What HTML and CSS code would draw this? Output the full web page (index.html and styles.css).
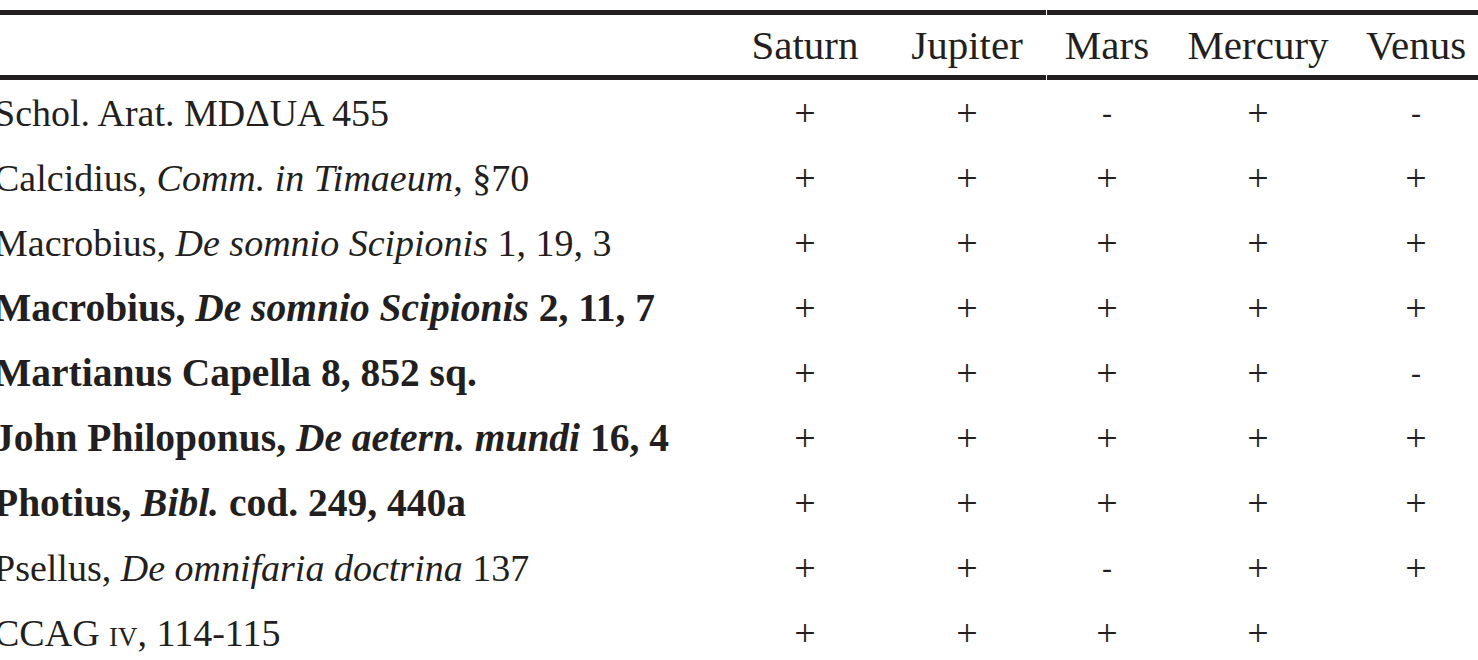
FILE: index.html
```html
<!DOCTYPE html>
<html lang="en">
<head>
<meta charset="utf-8">
<title>Planets table</title>
<link rel="stylesheet" href="styles.css">
</head>
<body>
<div class="wrap">
<table class="planets">
  <colgroup>
    <col class="c-src">
    <col class="c-sat">
    <col class="c-jup">
    <col class="c-mar">
    <col class="c-mer">
    <col class="c-ven">
  </colgroup>
  <thead>
    <tr>
      <th class="src"></th>
      <th>Saturn</th>
      <th>Jupiter</th>
      <th class="mars">Mars</th>
      <th>Mercury</th>
      <th>Venus</th>
    </tr>
  </thead>
  <tbody>
    <tr>
      <td class="src">Schol. Arat. MDΔUA <span class="num">455</span></td>
      <td>+</td><td>+</td><td class="minus">-</td><td>+</td><td class="minus">-</td>
    </tr>
    <tr>
      <td class="src">Calcidius, <i>Comm. in Timaeum</i>, §<span class="num">70</span></td>
      <td>+</td><td>+</td><td>+</td><td>+</td><td>+</td>
    </tr>
    <tr>
      <td class="src">Macrobius, <i>De somnio Scipionis</i> <span class="num">1, 19, 3</span></td>
      <td>+</td><td>+</td><td>+</td><td>+</td><td>+</td>
    </tr>
    <tr>
      <td class="src bold">Macrobius, <i>De somnio Scipionis</i> <span class="num">2, 11, 7</span></td>
      <td>+</td><td>+</td><td>+</td><td>+</td><td>+</td>
    </tr>
    <tr>
      <td class="src bold">Martianus Capella <span class="num">8, 852</span> sq.</td>
      <td>+</td><td>+</td><td>+</td><td>+</td><td class="minus">-</td>
    </tr>
    <tr>
      <td class="src bold">John Philoponus, <i>De aetern. mundi</i> <span class="num">16, 4</span></td>
      <td>+</td><td>+</td><td>+</td><td>+</td><td>+</td>
    </tr>
    <tr>
      <td class="src bold">Photius, <i>Bibl.</i> cod. <span class="num">249, 440a</span></td>
      <td>+</td><td>+</td><td>+</td><td>+</td><td>+</td>
    </tr>
    <tr>
      <td class="src">Psellus, <i>De omnifaria doctrina</i> <span class="num">137</span></td>
      <td>+</td><td>+</td><td class="minus">-</td><td>+</td><td>+</td>
    </tr>
    <tr>
      <td class="src">CCAG <span class="sc">iv</span>, <span class="num">114-115</span></td>
      <td>+</td><td>+</td><td>+</td><td>+</td><td></td>
    </tr>
  </tbody>
</table>
</div>
</body>
</html>
```

FILE: styles.css
```css
html, body {
  margin: 0;
  padding: 0;
  background: #ffffff;
  overflow: hidden;
}

body {
  font-family: "Liberation Serif", "Times New Roman", serif;
  color: #231f20;
}

.wrap {
  margin-top: 10px;
  margin-left: -6px;
}

.planets {
  border-collapse: separate;
  border-spacing: 0;
  table-layout: fixed;
  width: 1489px;
  font-size: 38px;
  line-height: 44px;
  font-variant-numeric: oldstyle-nums;
}

.c-src { width: 729px; }
.c-sat { width: 164px; }
.c-jup { width: 160px; }
.c-mar { width: 120px; }
.c-mer { width: 182px; }
.c-ven { width: 134px; }

.planets th {
  font-weight: normal;
  font-size: 41px;
  line-height: 44px;
  height: 60px;
  box-sizing: content-box;
  padding: 0;
  text-align: center;
  vertical-align: middle;
  border-top: 5px solid #231f20;
  border-bottom: 5px solid #231f20;
  white-space: nowrap;
}

.planets th.mars {
  position: relative;
}

.planets th.mars::after {
  content: "";
  position: absolute;
  left: -1px;
  top: -5px;
  bottom: -5px;
  width: 1px;
  background: #ffffff;
}

.planets td {
  height: 65px;
  padding: 0;
  text-align: center;
  vertical-align: middle;
  white-space: nowrap;
}

.planets td.src {
  text-align: left;
}

.planets td.bold {
  font-weight: bold;
  font-size: 39.5px;
}

.planets td.minus {
  font-size: 30px;
}

.sc {
  font-variant: small-caps;
}
```
